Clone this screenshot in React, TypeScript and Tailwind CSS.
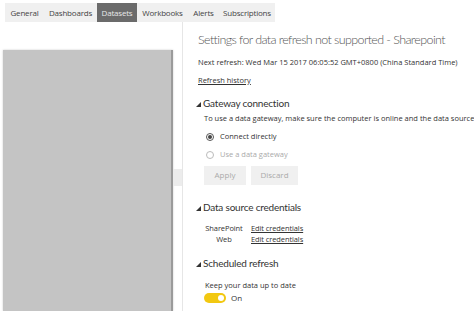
import React from 'react';

const tabs = [
  { label: 'General', w: 'w-[39px]' },
  { label: 'Dashboards', w: 'w-[53px]' },
  { label: 'Datasets', w: 'w-[40px]' },
  { label: 'Workbooks', w: 'w-[51px]' },
  { label: 'Alerts', w: 'w-[31px]' },
  { label: 'Subscriptions', w: 'w-[56px]' },
];

const Caret = () => (
  <svg width="5" height="5" viewBox="0 0 5 5" className="mr-[2px] mt-[3px]">
    <polygon points="5,0 5,5 0,5" fill="#333" />
  </svg>
);

const SectionTitle: React.FC<{ title: string }> = ({ title }) => (
  <div className="flex items-center text-[10px] tracking-[-0.2px] leading-none text-[#333] [font-family:Lato,sans-serif]">
    <Caret />
    <span>{title}</span>
  </div>
);

export default function App() {
  return (
    <div className="w-[474px] h-[311px] bg-white overflow-hidden relative [font-family:'Open_Sans','Noto_Sans',sans-serif]">
      <div className="flex pl-[5px] pt-[3px]">
        {tabs.map((t) => (
          <div
            key={t.label}
            className={
              t.w + ' h-[19px] flex items-center justify-center text-[8px] tracking-[-0.2px] ' +
              (t.label === 'Datasets' ? 'bg-[#6b6b6b] text-[#e8e8e8]' : 'bg-[#f0f0f0] text-[#444]')
            }
          >
            {t.label}
          </div>
        ))}
      </div>

      <div className="flex h-[289px]">
        <div className="w-[183px] shrink-0 flex border-r border-[#e6e6e6]">
          <div className="w-[170px] ml-[3px] mt-[28px] bg-[#c4c4c4] border-r-[2px] border-[#9a9a9a] shadow-[0_0_2px_rgba(0,0,0,0.2)]" />
          <div className="w-[9px] h-[17px] mt-[147px] bg-[#ececec]" />
        </div>

        <div className="pl-[15px] pt-[12px] flex flex-col whitespace-nowrap text-[#333]">
          <div className="text-[12.5px] tracking-[-0.6px] font-light text-[#555] leading-none [font-family:Lato,sans-serif]">Settings for data refresh not supported - Sharepoint</div>
          <div className="text-[7.5px] mt-[12px] leading-none">Next refresh: Wed Mar 15 2017 06:05:52 GMT+0800 (China Standard Time)</div>
          <div className="text-[7.5px] mt-[11px] leading-none underline">Refresh history</div>

          <div className="mt-[13px] -ml-[2px]"><SectionTitle title="Gateway connection" /></div>
          <div className="ml-[6px] flex flex-col">
            <div className="text-[7.5px] mt-[7px] leading-none">To use a data gateway, make sure the computer is online and the data source is added</div>
            <div className="flex items-center mt-[9px] ml-[2px] text-[7.5px]">
              <span className="w-[8px] h-[8px] rounded-full border border-[#555] flex items-center justify-center mr-[6px]">
                <span className="w-[4px] h-[4px] rounded-full bg-[#444]" />
              </span>
              Connect directly
            </div>
            <div className="flex items-center mt-[7px] ml-[2px] text-[7.5px] text-[#aaa]">
              <span className="w-[8px] h-[8px] rounded-full border border-[#bbb] mr-[6px]" />
              Use a data gateway
            </div>
            <div className="flex gap-[5px] mt-[5px]">
              <div className="w-[42px] h-[19px] bg-[#f0f0f0] text-[#aaa] text-[8px] flex items-center justify-center">Apply</div>
              <div className="w-[47px] h-[19px] bg-[#f0f0f0] text-[#aaa] text-[8px] flex items-center justify-center">Discard</div>
            </div>
          </div>

          <div className="mt-[17px] -ml-[2px]"><SectionTitle title="Data source credentials" /></div>
          <div className="ml-[6px] mt-[11px] grid grid-cols-[40px_auto] gap-x-[7px] text-[7.5px] leading-[11px] tracking-[-0.1px]">
            <span className="text-center">SharePoint</span>
            <span className="underline">Edit credentials</span>
            <span className="text-center">Web</span>
            <span className="underline">Edit credentials</span>
          </div>

          <div className="mt-[13px] -ml-[2px]"><SectionTitle title="Scheduled refresh" /></div>
          <div className="ml-[7px] text-[7.5px] mt-[14px] leading-none">Keep your data up to date</div>
          <div className="ml-[6px] mt-[3px] flex items-center text-[8px]">
            <span className="w-[22px] h-[10px] rounded-full bg-[#f2c811] flex items-center justify-end pr-[2px] mr-[5px]">
              <span className="w-[6px] h-[6px] rounded-full bg-white" />
            </span>
            On
          </div>
        </div>
      </div>
    </div>
  );
}
